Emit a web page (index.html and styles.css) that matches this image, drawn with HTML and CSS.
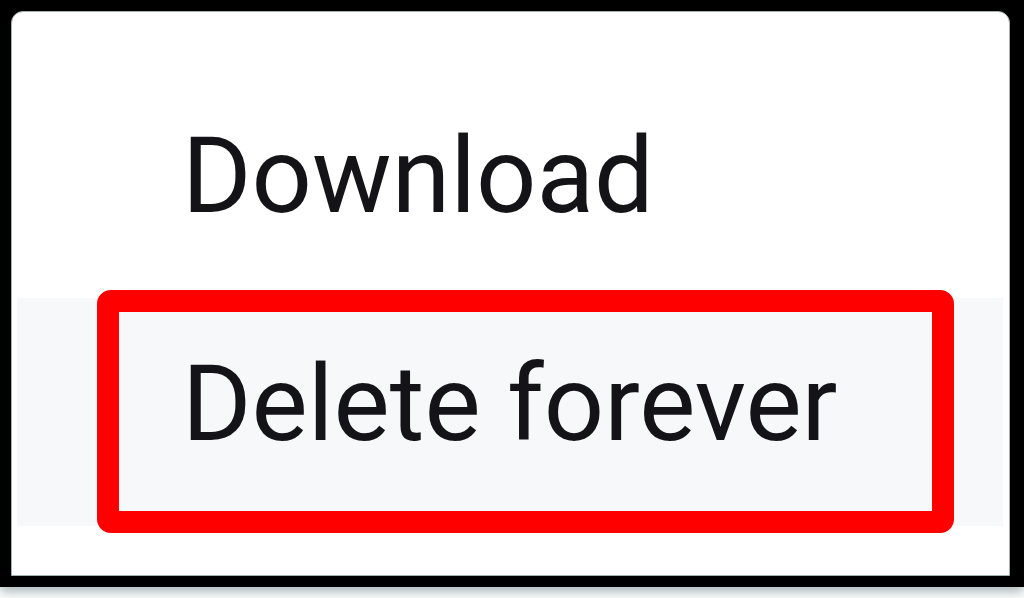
FILE: index.html
```html
<!DOCTYPE html>
<html lang="en">
<head>
<meta charset="utf-8">
<title>Menu</title>
<link rel="stylesheet" href="styles.css">
</head>
<body>
<div class="frame">
  <div class="menu">
    <div class="item">Download</div>
    <div class="item item-hover">Delete forever</div>
    <div class="highlight"></div>
  </div>
</div>
</body>
</html>
```

FILE: styles.css
```css
html, body {
  margin: 0;
  padding: 0;
  background: #ffffff;
}

body {
  width: 1024px;
  height: 598px;
  overflow: hidden;
}

.frame {
  background: #000000;
  padding: 11px 14px 11px 11px;
  box-shadow: 0 5px 10px rgba(70, 100, 100, 0.45);
}

.menu {
  position: relative;
  background: #ffffff;
  border: 1px solid #a3b1b1;
  border-radius: 12px 12px 0 0;
  padding: 58px 6px 49px 5px;
}

.item {
  height: 228px;
  box-sizing: border-box;
  padding: 43px 0 59px 165px;
  font-family: Roboto, "Liberation Sans", sans-serif;
  font-size: 106px;
  line-height: 126px;
  color: #141418;
  white-space: nowrap;
}

.item-hover {
  background: #f7f8fa;
}

.highlight {
  position: absolute;
  left: 85px;
  top: 278px;
  width: 857px;
  height: 243px;
  box-sizing: border-box;
  border: 22px solid #ff0000;
  border-radius: 14px;
}
```
